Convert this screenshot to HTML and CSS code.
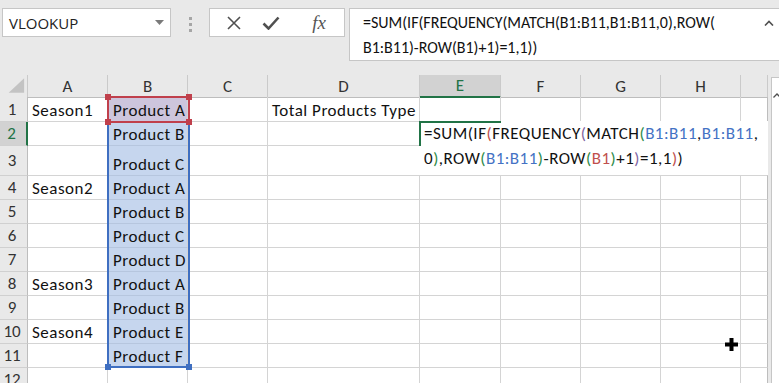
FILE: index.html
```html
<!doctype html>
<html lang="en">

<head>
  <title>Count unique products</title>
  <link rel="stylesheet" href="styles.css">
</head>

<body>
  <div class="app">
    <div class="formula-bar">
      <div class="name-box">
        <span>VLOOKUP</span>
        <svg class="caret" width="9" height="5" viewBox="0 0 9 5"><path d="M0 0h9L4.5 5z" fill="#7a7a7a"/></svg>
      </div>
      <div class="grip"><i></i><i></i><i></i></div>
      <div class="fx-buttons">
        <svg width="16" height="16" viewBox="0 0 16 16"><path d="M2 2l12 12M14 2L2 14" stroke="#505050" stroke-width="1.6" fill="none"/></svg>
        <svg width="18" height="14" viewBox="0 0 18 14"><path d="M1.5 7.5l5 5L16.5 1.5" stroke="#505050" stroke-width="2.6" fill="none"/></svg>
        <span class="fx">fx</span>
      </div>
      <div class="formula-input">
        <div class="formula-lines">
          <div>=SUM(IF(FREQUENCY(MATCH(B1:B11,B1:B11,0),ROW(</div>
          <div>B1:B11)-ROW(B1)+1)=1,1))</div>
        </div>
        <svg class="expand" width="10" height="6" viewBox="0 0 10 6"><path d="M1 5.5L5 1.5l4 4" stroke="#505050" stroke-width="1.6" fill="none"/></svg>
      </div>
    </div>

    <div class="sheet-area">
      <div class="sheet">
        <div class="row head">
          <div class="c corner"><svg width="28" height="22" viewBox="0 0 28 22"><path d="M25 3v15H9z" fill="#c3c3c3"/></svg></div>
          <div class="c">A</div><div class="c">B</div><div class="c">C</div><div class="c">D</div>
          <div class="c active">E</div><div class="c">F</div><div class="c">G</div><div class="c">H</div><div class="c last"></div>
        </div>
        <div class="row r1">
          <div class="c rh">1</div><div class="c">Season1</div><div class="c sel first">Product A</div><div class="c"></div>
          <div class="c">Total Products Type</div><div class="c"></div><div class="c"></div><div class="c"></div><div class="c"></div><div class="c last"></div>
        </div>
        <div class="row">
          <div class="c rh active">2</div><div class="c"></div><div class="c sel">Product B</div><div class="c"></div>
          <div class="c"></div><div class="c"></div><div class="c"></div><div class="c"></div><div class="c"></div><div class="c last"></div>
        </div>
        <div class="row r3">
          <div class="c rh">3</div><div class="c"></div><div class="c sel">Product C</div><div class="c"></div>
          <div class="c"></div><div class="c"></div><div class="c"></div><div class="c"></div><div class="c"></div><div class="c last"></div>
        </div>
        <div class="row">
          <div class="c rh">4</div><div class="c">Season2</div><div class="c sel">Product A</div><div class="c"></div>
          <div class="c"></div><div class="c"></div><div class="c"></div><div class="c"></div><div class="c"></div><div class="c last"></div>
        </div>
        <div class="row">
          <div class="c rh">5</div><div class="c"></div><div class="c sel">Product B</div><div class="c"></div>
          <div class="c"></div><div class="c"></div><div class="c"></div><div class="c"></div><div class="c"></div><div class="c last"></div>
        </div>
        <div class="row">
          <div class="c rh">6</div><div class="c"></div><div class="c sel">Product C</div><div class="c"></div>
          <div class="c"></div><div class="c"></div><div class="c"></div><div class="c"></div><div class="c"></div><div class="c last"></div>
        </div>
        <div class="row">
          <div class="c rh">7</div><div class="c"></div><div class="c sel">Product D</div><div class="c"></div>
          <div class="c"></div><div class="c"></div><div class="c"></div><div class="c"></div><div class="c"></div><div class="c last"></div>
        </div>
        <div class="row">
          <div class="c rh">8</div><div class="c">Season3</div><div class="c sel">Product A</div><div class="c"></div>
          <div class="c"></div><div class="c"></div><div class="c"></div><div class="c"></div><div class="c"></div><div class="c last"></div>
        </div>
        <div class="row">
          <div class="c rh">9</div><div class="c"></div><div class="c sel">Product B</div><div class="c"></div>
          <div class="c"></div><div class="c"></div><div class="c"></div><div class="c"></div><div class="c"></div><div class="c last"></div>
        </div>
        <div class="row">
          <div class="c rh">10</div><div class="c">Season4</div><div class="c sel">Product E</div><div class="c"></div>
          <div class="c"></div><div class="c"></div><div class="c"></div><div class="c"></div><div class="c"></div><div class="c last"></div>
        </div>
        <div class="row">
          <div class="c rh">11</div><div class="c"></div><div class="c sel">Product F</div><div class="c"></div>
          <div class="c"></div><div class="c"></div><div class="c"></div><div class="c"></div><div class="c"></div><div class="c last"></div>
        </div>
        <div class="row">
          <div class="c rh">12</div><div class="c"></div><div class="c"></div><div class="c"></div>
          <div class="c"></div><div class="c"></div><div class="c"></div><div class="c"></div><div class="c"></div><div class="c last"></div>
        </div>

        <!-- range highlights over column B -->
        <div class="range blue"><i class="h bl"></i><i class="h br"></i></div>
        <div class="range red"><i class="h tl"></i><i class="h tr"></i><i class="h bl"></i><i class="h br"></i></div>

        <!-- E2 in edit mode -->
        <div class="editor">
          <div>=SUM(IF<b class="red">(</b>FREQUENCY<b class="purple">(</b>MATCH<b class="green">(</b><b class="blue">B1:B11</b>,<b class="blue">B1:B11</b>,</div>
          <div>0<b class="green">)</b>,ROW<b class="green">(</b><b class="blue">B1:B11</b><b class="green">)</b>-ROW<b class="green">(</b><b class="red">B1</b><b class="green">)</b>+1<b class="purple">)</b>=1,1<b class="red">)</b>)</div>
        </div>

        <svg class="cursor" width="13" height="13" viewBox="0 0 13 13"><path d="M4.5 0h4v4.5H13v4H8.5V13h-4V8.5H0v-4h4.5z" fill="#000"/></svg>
      </div>
      <div class="vscroll">
        <div class="track">
          <svg width="8" height="5" viewBox="0 0 8 5"><path d="M0.5 4.5L4 1l3.5 3.5" stroke="#505050" stroke-width="1.3" fill="none"/></svg>
        </div>
      </div>
    </div>
  </div>
</body>

</html>
```

FILE: styles.css
```css
body {
  margin: 0;
  overflow: hidden;
  background-color: #e9e9e9;
  font-family: Carlito, Lato, "Liberation Sans", sans-serif;
  font-size: 16px;
  color: #111;
}

.app {
  width: 779px;
  height: 383px;
  overflow: hidden;
}

/* formula bar */
.formula-bar {
  display: flex;
  align-items: flex-start;
  height: 75px;
  padding-top: 8px;
  box-sizing: border-box;
}

.name-box {
  display: flex;
  align-items: center;
  justify-content: space-between;
  width: 169px;
  height: 29px;
  margin-left: 2px;
  padding: 0 6px 0 6px;
  box-sizing: border-box;
  background: #fff;
  border: 1px solid #c6c6c6;
  font-family: "Open Sans", "Noto Sans", sans-serif;
  font-size: 15px;
  color: #222;
}

.grip {
  display: flex;
  flex-direction: column;
  align-items: center;
  gap: 3px;
  width: 38px;
  padding-top: 9px;
}

.grip i {
  display: block;
  width: 3px;
  height: 3px;
  background: #a6a6a6;
}

.fx-buttons {
  display: flex;
  align-items: center;
  justify-content: space-around;
  width: 136px;
  height: 29px;
  padding: 0 8px 0 6px;
  box-sizing: border-box;
  background: #fff;
  border: 1px solid #c6c6c6;
}

.fx {
  font-family: "Liberation Serif", serif;
  font-style: italic;
  font-size: 19px;
  color: #555;
  margin-left: 12px;
}

.formula-input {
  display: flex;
  justify-content: space-between;
  flex: 1;
  height: 53px;
  margin-left: 4px;
  margin-right: -6px;
  padding: 1px 10px 0 13px;
  box-sizing: border-box;
  background: #fff;
  border: 1px solid #c6c6c6;
  line-height: 25px;
  white-space: nowrap;
}

.expand {
  margin-top: 10px;
}

/* sheet */
.sheet-area {
  display: flex;
  height: 308px;
}

.sheet {
  position: relative;
  width: 768px;
  background: #fff;
  font-size: 17px;
}

.row {
  display: grid;
  grid-template-columns: 28px 80px 80px 80px 152px 81px 80px 80px 80px 27px;
  height: 24px;
}

.row.r1 { height: 25px; }
.row.r3 { height: 30px; }
.row.head { height: 22px; }

.c {
  display: flex;
  align-items: flex-end;
  padding: 0 4px;
  line-height: 21px;
  letter-spacing: 0.5px;
  white-space: nowrap;
  border-right: 1px solid #d4d4d4;
  border-bottom: 1px solid #d4d4d4;
}

.c.last {
  border-right-color: #bdbdbd;
}

.head .c {
  align-items: center;
  justify-content: center;
  padding: 0;
  background: #e9e9e9;
  color: #333;
  letter-spacing: 0;
  border-right-color: #cacaca;
  border-bottom-color: #bdbdbd;
}

.head .corner {
  padding: 0;
}

.head .c.active {
  background: #d2d2d2;
  color: #217346;
  border-bottom: 2px solid #217346;
}

.c.rh {
  align-items: center;
  justify-content: center;
  padding: 0 3px 0 0;
  background: #e9e9e9;
  color: #333;
  letter-spacing: 0;
  border-right-color: #bdbdbd;
  border-bottom-color: #d0d0d0;
}

.c.rh.active {
  background: #d2d2d2;
  color: #217346;
  border-right: 2px solid #217346;
}

.c.sel {
  padding-left: 5px;
  background: #c6d6ee;
  border-bottom-color: #b6c6de;
}

.c.sel.first {
  background: #cdc5dc;
}

/* overlays */
.range {
  position: absolute;
  left: 107px;
  width: 83px;
  top: 21px;
  box-sizing: border-box;
}

.range.blue {
  height: 272px;
  border: 2px solid #3f6fc1;
}

.range.red {
  height: 27px;
  border: 2px solid #c0404c;
}

.h {
  position: absolute;
  width: 6px;
  height: 6px;
  background: #3f6fc1;
}

.red .h { background: #c0404c; }
.h.tl { left: -4px; top: -4px; }
.h.tr { right: -4px; top: -4px; }
.h.bl { left: -4px; bottom: -4px; }
.h.br { right: -4px; bottom: -4px; }

.editor {
  position: absolute;
  left: 419px;
  top: 46px;
  width: 349px;
  height: 54px;
  padding-left: 5px;
  box-sizing: border-box;
  background: #fff;
  line-height: 25px;
  letter-spacing: 0.5px;
  white-space: nowrap;
}

.editor::before {
  content: "";
  position: absolute;
  left: 0;
  top: 0;
  width: 82px;
  height: 2px;
  background: #217346;
}

.editor::after {
  content: "";
  position: absolute;
  left: 0;
  top: 0;
  width: 2px;
  height: 25px;
  background: #217346;
}

.editor b { font-weight: normal; }
.editor .red { color: #c0504d; }
.editor .purple { color: #8064a2; }
.editor .green { color: #2e8b4a; }
.editor .blue { color: #4472c4; }

.cursor {
  position: absolute;
  left: 725px;
  top: 263px;
}

.vscroll {
  width: 11px;
  padding: 2px 0 0 3px;
  box-sizing: border-box;
}

.track {
  height: 100%;
  background: #fff;
  border-left: 1px solid #c6c6c6;
  border-top: 1px solid #c6c6c6;
  padding: 5px 0 0 1px;
  box-sizing: border-box;
}
```
